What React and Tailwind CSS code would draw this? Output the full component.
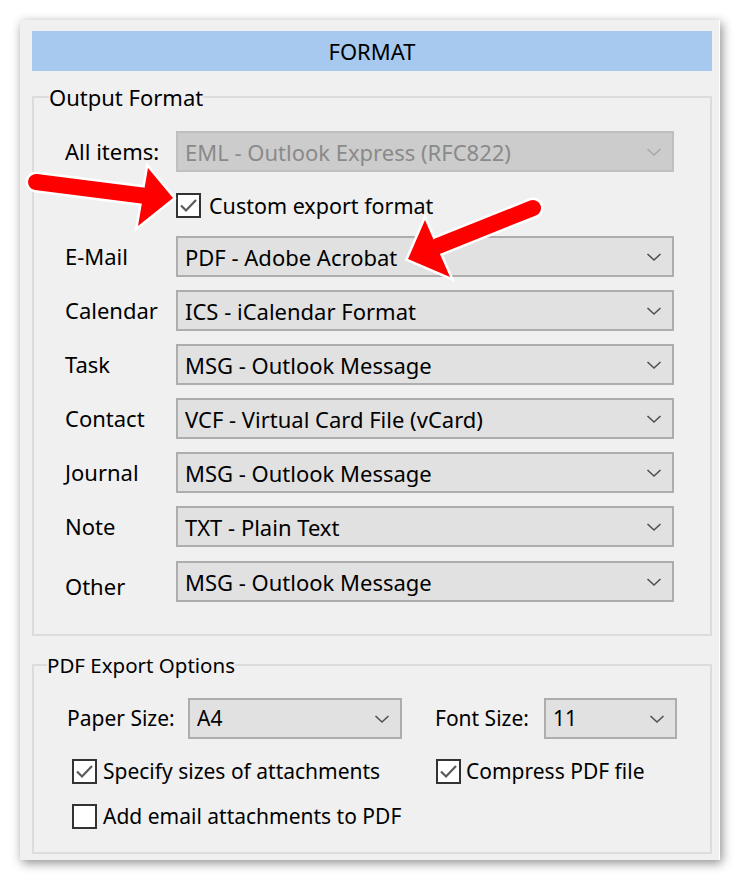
import React from "react"

const font = { fontFamily: '"Noto Sans", "Open Sans", sans-serif' }

// little chevron used in every combo box
const Chevron = ({ muted }) => (
  <svg width="16" height="10" viewBox="0 0 16 10" className="shrink-0">
    <path d="M1.5 2 L8 8 L14.5 2" fill="none" stroke={muted ? "#a8a8a8" : "#505050"} strokeWidth="1.6" />
  </svg>
)

const Combo = ({ value, disabled, small, className = "" }) => (
  <div
    className={
      "h-[41px] flex items-center justify-between pl-[7px] pr-[10px] border-2 " +
      (disabled ? "bg-[#cccccc] border-[#bfbfbf] text-[#8a8a8a] " : "bg-[#e1e1e1] border-[#adadad] text-black ") +
      className
    }
  >
    <span className={(small ? "text-[21px]" : "text-[22px]") + " leading-none whitespace-nowrap"}>{value}</span>
    <Chevron muted={disabled} />
  </div>
)

const Check = ({ checked }) => (
  <div className="w-[25px] h-[25px] shrink-0 border-2 border-[#333333] bg-white flex items-center justify-center">
    {checked && (
      <svg width="21" height="21" viewBox="0 0 21 21">
        <path d="M3 10.5 L8 15.5 L18 5" fill="none" stroke="#5a5a5a" strokeWidth="2.2" />
      </svg>
    )}
  </div>
)

const rows = [
  { label: "E-Mail", value: "PDF - Adobe Acrobat" },
  { label: "Calendar", value: "ICS - iCalendar Format" },
  { label: "Task", value: "MSG - Outlook Message" },
  { label: "Contact", value: "VCF - Virtual Card File (vCard)" },
  { label: "Journal", value: "MSG - Outlook Message" },
  { label: "Note", value: "TXT - Plain Text" },
  { label: "Other", value: "MSG - Outlook Message", shift: true },
]

const Arrows = () => (
  <svg className="absolute inset-0 pointer-events-none" width="741" height="880" viewBox="0 0 741 880">
    {/* left arrow */}
    <line x1="36" y1="182" x2="146" y2="196" stroke="white" strokeWidth="21" strokeLinecap="round" />
    <polygon points="148,168 173,198 138,226" fill="white" stroke="white" strokeWidth="5" strokeLinejoin="miter" />
    <line x1="36" y1="182" x2="146" y2="196" stroke="#ff0000" strokeWidth="16" strokeLinecap="round" />
    <polygon points="148,168 173,198 138,226" fill="#ff0000" />
    {/* right arrow */}
    <line x1="533" y1="208" x2="438" y2="246" stroke="white" strokeWidth="21" strokeLinecap="round" />
    <polygon points="425,220 408,259 450,277" fill="white" stroke="white" strokeWidth="5" />
    <line x1="533" y1="208" x2="438" y2="246" stroke="#ff0000" strokeWidth="16" strokeLinecap="round" />
    <polygon points="425,220 408,259 450,277" fill="#ff0000" />
  </svg>
)

export default function App() {
  return (
    <div className="relative w-[741px] h-[880px] bg-white" style={font}>
      <div className="pt-[20px] pl-[20px]">
        <div className="w-[700px] h-[840px] bg-[#f0f0f0] border-r border-white shadow-[2px_3px_10px_rgba(0,0,0,0.45)] pt-[11px] pl-[12px] pr-[7px]">
          <div className="h-[40px] bg-[#a7c9ef] flex items-center justify-center text-[22px] text-black">FORMAT</div>

          <fieldset className="mt-[14px] border-2 border-[#dcdcdc] p-0 m-0 min-w-0">
            <legend className="ml-[15px] text-[22px] leading-[24px] text-black">Output Format</legend>
            <div className="pt-[22px] pl-[31px] pb-[31px] flex flex-col">
              <div className="flex items-center">
                <span className="w-[111px] text-[22px] text-black">All items:</span>
                <Combo value="EML - Outlook Express (RFC822)" disabled className="w-[498px]" />
              </div>
              <div className="flex items-center mt-[21px] ml-[111px] gap-[8px]">
                <Check checked />
                <span className="text-[21.5px] leading-none text-black">Custom export format</span>
              </div>
              <div className="mt-[18px] flex flex-col gap-[13px]">
                {rows.map((r) => (
                  <div key={r.label} className="flex items-center">
                    <span className={"w-[111px] text-[22px] text-black " + (r.shift ? "pt-[10px]" : "")}>{r.label}</span>
                    <Combo value={r.value} className="w-[498px]" />
                  </div>
                ))}
              </div>
            </div>
          </fieldset>

          <fieldset className="mt-[17px] border-2 border-[#dcdcdc] p-0 m-0 min-w-0">
            <legend className="ml-[13px] text-[20.5px] leading-[24px] text-black">PDF Export Options</legend>
            <div className="pt-[21px] pl-[33px] pb-[23px] text-[21px]">
              <div className="flex items-center">
                <span className="w-[121px] text-black">Paper Size:</span>
                <Combo value="A4" small className="w-[214px]" />
                <span className="ml-[33px] w-[109px] text-black">Font Size:</span>
                <Combo value="11" small className="w-[133px]" />
              </div>
              <div className="mt-[20px] flex items-center">
                <div className="ml-[5px] w-[364px] flex items-center gap-[6px]">
                  <Check checked />
                  <span className="leading-none text-black">Specify sizes of attachments</span>
                </div>
                <div className="flex items-center gap-[5px]">
                  <Check checked />
                  <span className="leading-none text-black">Compress PDF file</span>
                </div>
              </div>
              <div className="mt-[20px] ml-[5px] flex items-center gap-[6px]">
                <Check />
                <span className="leading-none text-black">Add email attachments to PDF</span>
              </div>
            </div>
          </fieldset>
        </div>
      </div>
      <Arrows />
    </div>
  )
}
